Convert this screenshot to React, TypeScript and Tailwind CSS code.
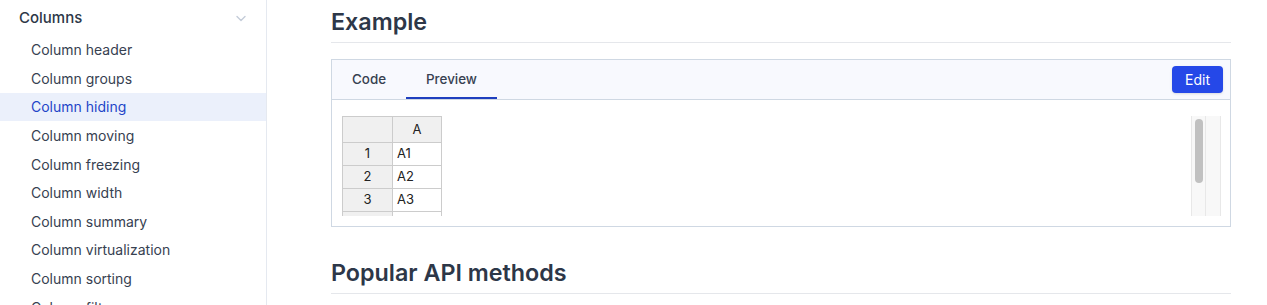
import React from "react";

const items = [
  "Column header",
  "Column groups",
  "Column hiding",
  "Column moving",
  "Column freezing",
  "Column width",
  "Column summary",
  "Column virtualization",
  "Column sorting",
  "Column filter",
];

export default function App() {
  return (
    <div className="flex h-[305px] overflow-hidden bg-white text-[#2d3748]" style={{ fontFamily: "Inter, 'Noto Sans', sans-serif" }}>
      <aside className="w-[267px] shrink-0 border-r border-[#e5e9f0] pt-[6px]">
        <div className="flex h-[24px] items-center justify-between pl-[19px] pr-[18px]">
          <span className="text-[15px] font-medium text-[#2d3748]">Columns</span>
          <svg width="14" height="14" viewBox="0 0 14 14" fill="none" stroke="#c4ccd8" strokeWidth="1.4" strokeLinecap="round" strokeLinejoin="round">
            <path d="M3 5.5l4 4 4-4" />
          </svg>
        </div>
        <ul className="mt-[5.5px]">
          {items.map((t) => {
            const active = t === "Column hiding";
            return (
              <li
                key={t}
                className={`flex h-[28.6px] items-center pl-[31px] text-[14px] ${active ? "bg-[#ebf0fb] text-[#1f45c8]" : "text-[#374151]"}`}
              >
                {t}
              </li>
            );
          })}
        </ul>
      </aside>
      <main className="flex-1 pl-[64px] pr-[36px]">
        <h2 className="flex h-[43px] items-end border-b border-[#e5e7eb] pb-[2px] text-[23.3px] font-semibold text-[#2d3748]">
          Example
        </h2>
        <div className="mt-[16px] border border-[#cfd8e3]">
          <div className="flex h-[40px] items-stretch justify-between border-b border-[#cfd8e3] bg-[#f8f9fe] pr-[7px]">
            <div className="flex">
              <div className="flex w-[74px] items-center justify-center text-[13.4px] font-medium text-[#374151]">Code</div>
              <div className="flex w-[91px] items-center justify-center border-b-[2px] border-[#1f3fbf] pt-[2px] text-[13.4px] font-medium text-[#374151]">Preview</div>
            </div>
            <div className="flex items-center">
              <button className="h-[27px] rounded-[4px] bg-[#2548e8] px-[13px] text-[14px] text-white shadow-sm">Edit</button>
            </div>
          </div>
          <div className="flex h-[126px] justify-between pt-[16px] pl-[10px] pr-[9px] pb-[10px]">
            <div className="h-[100px] overflow-hidden">
              <table className="border-collapse text-[13px] text-[#222]" style={{ fontFamily: "Inter, Arial, sans-serif" }}>
                <thead>
                  <tr className="h-[26px]">
                    <th className="w-[50px] border border-[#ccc] bg-[#f0f0f0] font-normal"></th>
                    <th className="w-[49px] border border-[#ccc] bg-[#f0f0f0] font-normal">A</th>
                  </tr>
                </thead>
                <tbody>
                  {[1, 2, 3, 4].map((n) => (
                    <tr key={n} className="h-[23px]">
                      <td className="border border-[#ccc] bg-[#f0f0f0] text-center">{n <= 3 ? n : ""}</td>
                      <td className="border border-[#ccc] bg-white px-[4px]">{n <= 3 ? `A${n}` : ""}</td>
                    </tr>
                  ))}
                </tbody>
              </table>
            </div>
            <div className="flex h-[100px]">
              <div className="w-[15px] border-x border-[#e8e8e8] bg-[#f8f8f8] pt-[3px] pl-[3px]">
                <div className="h-[64px] w-[8px] rounded-full bg-[#c1c1c1]"></div>
              </div>
              <div className="w-[15px] border-r border-[#e8e8e8] bg-[#f8f8f8]"></div>
            </div>
          </div>
        </div>
        <h2 className="mt-[32px] flex h-[35px] items-end border-b border-[#e5e7eb] pb-[2px] text-[23.3px] font-semibold text-[#2d3748]">
          Popular API methods
        </h2>
      </main>
    </div>
  );
}
